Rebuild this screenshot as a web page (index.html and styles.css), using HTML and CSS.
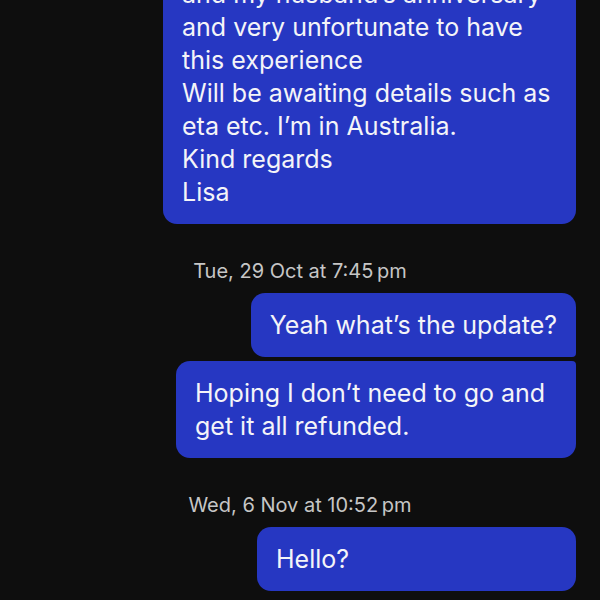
FILE: index.html
```html
<!DOCTYPE html>
<html lang="en">
<head>
    <meta charset="UTF-8">
    <meta name="viewport" content="width=device-width, initial-scale=1.0">
    <title>Messages</title>
    <link rel="stylesheet" href="styles.css">
</head>
<body>
    <div class="thread">
        <div class="bubble bubble-last bubble-long">
            and my husband’s anniversary<br>
            and very unfortunate to have<br>
            this experience<br>
            Will be awaiting details such as<br>
            eta etc. I’m in Australia.<br>
            Kind regards<br>
            Lisa
        </div>

        <div class="timestamp">Tue, 29 Oct at 7:45&#8239;pm</div>

        <div class="bubble bubble-first">Yeah what’s the update?</div>
        <div class="bubble bubble-last bubble-mid">
            Hoping I don’t need to go and<br>
            get it all refunded.
        </div>

        <div class="timestamp">Wed, 6 Nov at 10:52&#8239;pm</div>

        <div class="bubble">Hello?</div>
    </div>
</body>
</html>
```

FILE: styles.css
```css
body, html {
    margin: 0;
    padding: 0;
    background: #0e0e0e;
    font-family: "Inter", sans-serif;
    overflow: hidden;
}

.thread {
    display: flex;
    flex-direction: column;
    align-items: flex-end;
    gap: 4px;
    padding: 0 24px;
    margin-top: -38px;
}

.bubble {
    box-sizing: border-box;
    min-width: 319px;
    padding: 16px 19px 15px 19px;
    background: #2637c2;
    color: #f4f4f8;
    font-size: 25px;
    line-height: 33px;
    border-radius: 14px;
}

/* grouped messages share a tighter corner */
.bubble-first {
    border-bottom-right-radius: 4px;
}

.bubble-last {
    border-top-right-radius: 4px;
}

.bubble-long {
    width: 413px;
}

.bubble-mid {
    width: 400px;
}

.timestamp {
    align-self: stretch;
    text-align: center;
    color: #c6c6c6;
    font-size: 20px;
    line-height: 24px;
    margin: 31px 0 6px;
}
```
